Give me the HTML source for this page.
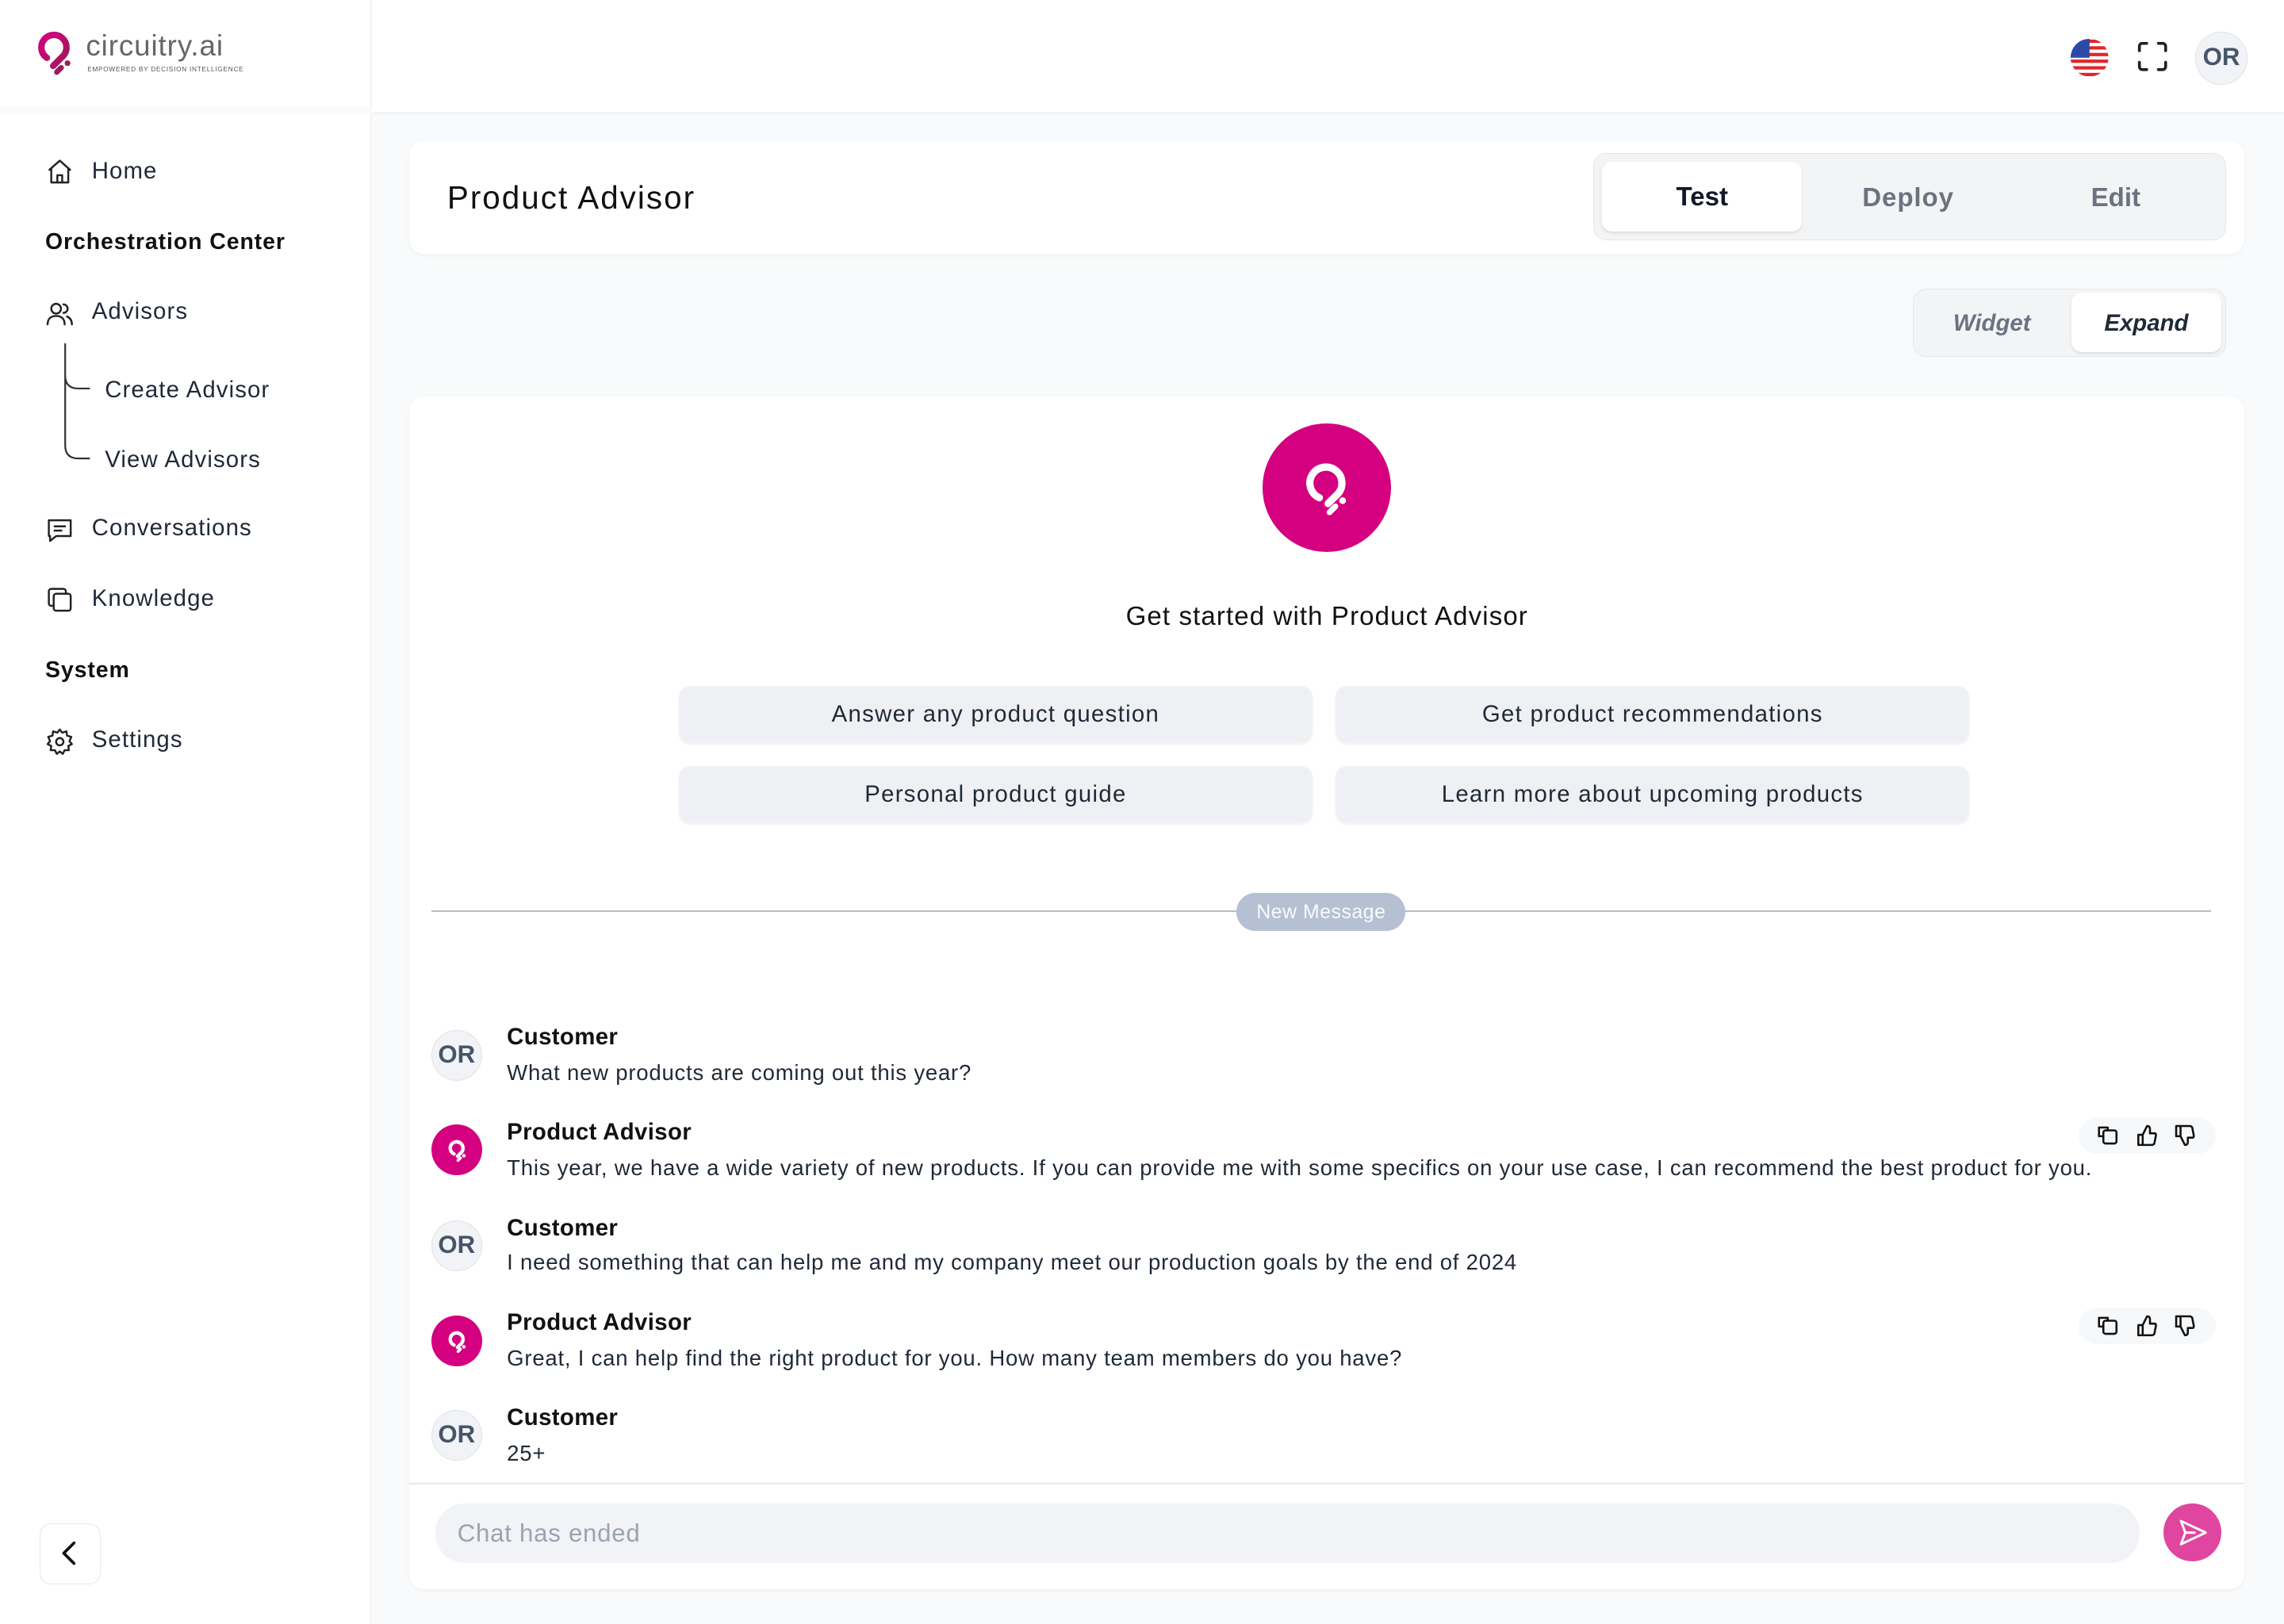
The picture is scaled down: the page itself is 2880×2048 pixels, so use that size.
<!DOCTYPE html>
<html><head><meta charset="utf-8"><style>
*{box-sizing:border-box;margin:0;padding:0}
html,body{width:2880px;height:2048px;overflow:hidden;background:#f9fafb}
#root{zoom:1.836735;width:1568px;height:1115px;position:relative;font-family:"Liberation Sans",sans-serif;color:#111827}
.abs{position:absolute}
.side{left:0;top:0;width:255px;height:1115px;background:#fff;border-right:1px solid #ececee}
.nav{position:absolute;left:63px;font-size:16px;color:#1f2937;line-height:20px;letter-spacing:.6px}
.ic{position:absolute;left:31px;width:20px;height:20px}
.bold{font-weight:bold;left:31px;font-size:15.5px;color:#111;letter-spacing:.5px}
.top{left:256px;top:0;right:0;height:78px;background:#fff;border-bottom:1px solid #e5e7eb}
.card{background:#fff;border-radius:10px;box-shadow:0 1px 3px rgba(0,0,0,.04)}
.sug{position:absolute;width:435px;height:39px;background:#eef0f4;border-radius:8px;font-size:16px;color:#1f2937;text-align:center;line-height:39px;box-shadow:0 1px 2px rgba(0,0,0,.06);letter-spacing:.7px}
.av{position:absolute;left:296px;width:35px;height:35px;border-radius:50%;background:#f1f3f6;border:1px solid #e0e3e8;color:#475569;font-weight:bold;font-size:17px;text-align:center;line-height:33px}
.avp{position:absolute;left:296px;width:35px;height:35px;border-radius:50%;background:#d4007f}
.nm{position:absolute;left:348px;font-weight:bold;font-size:16px;color:#111;letter-spacing:.2px}
.tx{position:absolute;left:348px;font-size:15px;color:#1f2937;white-space:nowrap;letter-spacing:.42px}
.act{position:absolute;left:1427px;width:94px;height:25px;border-radius:13px;background:#f7f8fa}
</style></head><body><div id="root">
<div class="abs side">
 <svg class="abs" style="left:24px;top:21px" width="30" height="32" viewBox="0 0 24 26"><defs><linearGradient id="g" x1="0" y1="0" x2="1" y2="1"><stop offset="0" stop-color="#d4007f"/><stop offset="1" stop-color="#9b1c5a"/></linearGradient></defs><path d="M6.5 15 A7 7 0 1 1 15 14.5 L10 19.5" fill="none" stroke="url(#g)" stroke-width="3.6" stroke-linecap="round"/><line x1="12" y1="23" x2="14.5" y2="20.5" stroke="#9b1c5a" stroke-width="3" stroke-linecap="round"/><circle cx="18" cy="18" r="1.6" fill="#9b1c5a"/></svg>
 <div class="abs" style="left:59px;top:20px;font-size:20px;color:#666;letter-spacing:.5px">circuitry.ai</div>
 <div class="abs" style="left:60px;top:45px;font-size:4.5px;color:#555;letter-spacing:.4px">EMPOWERED BY DECISION INTELLIGENCE</div>
 <div class="abs" style="left:0;top:73px;width:255px;height:5px;background:#fafafa"></div>
 <svg class="ic" style="top:108px" viewBox="0 0 24 24" fill="none" stroke="#222" stroke-width="1.6" stroke-linejoin="round"><path d="M3 11 L12 3 L21 11 M5 9.5 V21 H19 V9.5 M10 21 V15 H14 V21"/></svg>
 <div class="nav" style="top:108px">Home</div>
 <div class="nav bold" style="top:156px">Orchestration Center</div>
 <svg class="ic" style="top:205px" viewBox="0 0 24 24" fill="none" stroke="#222" stroke-width="1.6" stroke-linecap="round"><circle cx="9" cy="8" r="4"/><path d="M2 21 C2 16 5 14 9 14 C13 14 16 16 16 21"/><path d="M15 4.5 A3.5 3.5 0 0 1 15 11.5 M18 14.5 C20.5 15.5 22 17.5 22 21"/></svg>
 <div class="nav" style="top:204px">Advisors</div>
 <svg class="abs" style="left:40px;top:236px" width="26" height="86" fill="none" stroke="#333" stroke-width="1.2"><path d="M5 0 V22 Q5 31 14 31 H22 M5 22 V70 Q5 79 14 79 H22"/></svg>
 <div class="nav" style="left:72px;top:258px">Create Advisor</div>
 <div class="nav" style="left:72px;top:306px">View Advisors</div>
 <svg class="ic" style="top:354px" viewBox="0 0 24 24" fill="none" stroke="#222" stroke-width="1.6" stroke-linejoin="round"><path d="M3 4 H21 V17 H9 L4 21 V17 H3 Z M7 9 H17 M7 12.5 H14"/></svg>
 <div class="nav" style="top:353px">Conversations</div>
 <svg class="ic" style="top:402px" viewBox="0 0 24 24" fill="none" stroke="#222" stroke-width="1.6"><rect x="7" y="7" width="14" height="14" rx="2"/><path d="M17 7 V5 A2 2 0 0 0 15 3 H5 A2 2 0 0 0 3 5 V15 A2 2 0 0 0 5 17 H7"/></svg>
 <div class="nav" style="top:401px">Knowledge</div>
 <div class="nav bold" style="top:450px">System</div>
 <svg class="ic" style="top:499px" viewBox="0 0 24 24" fill="none" stroke="#222" stroke-width="1.6"><circle cx="12" cy="12" r="3"/><path d="M12 2 L14 4.5 L17.5 3.5 L18 7 L21.5 8 L20 11.5 L22 14 L19 15.5 L19.5 19 L16 19 L14.5 22 L12 20 L9.5 22 L8 19 L4.5 19 L5 15.5 L2 14 L4 11.5 L2.5 8 L6 7 L6.5 3.5 L10 4.5 Z" stroke-linejoin="round"/></svg>
 <div class="nav" style="top:498px">Settings</div>
 <div class="abs" style="left:27px;top:1046px;width:42px;height:42px;border:1px solid #e5e7eb;border-radius:8px;background:#fff"><svg width="40" height="40" viewBox="0 0 40 40" fill="none" stroke="#111" stroke-width="2" stroke-linecap="round" stroke-linejoin="round"><path d="M23 13 L16 20 L23 27"/></svg></div>
</div>
<div class="abs top">
 <svg class="abs" style="left:1165px;top:26px" width="27" height="27" viewBox="0 0 26 26"><defs><clipPath id="c"><circle cx="13" cy="13" r="12.5"/></clipPath></defs><g clip-path="url(#c)"><rect width="26" height="26" fill="#fff"/><g fill="#e0262a"><rect y="1" width="26" height="2.2"/><rect y="5.4" width="26" height="2.2"/><rect y="9.8" width="26" height="2.2"/><rect y="14.2" width="26" height="2.2"/><rect y="18.6" width="26" height="2.2"/><rect y="23" width="26" height="2.2"/></g><rect width="13" height="13" fill="#2b4aa8"/></g></svg>
 <svg class="abs" style="left:1211px;top:28px" width="22" height="22" viewBox="0 0 22 22" fill="none" stroke="#222" stroke-width="2" stroke-linecap="round"><path d="M2 7 V4 A2 2 0 0 1 4 2 H7 M15 2 H18 A2 2 0 0 1 20 4 V7 M20 15 V18 A2 2 0 0 1 18 20 H15 M7 20 H4 A2 2 0 0 1 2 18 V15"/></svg>
 <div class="abs" style="left:1251px;top:22px;width:36px;height:36px;border-radius:50%;background:#f1f3f6;border:1px solid #e0e3e8;text-align:center;line-height:34px;font-weight:bold;font-size:17px;color:#475569">OR</div>
</div>
<div class="abs card" style="left:281px;top:97px;width:1260px;height:77px"></div>
<div class="abs" style="left:307px;top:123px;font-size:22px;color:#111;letter-spacing:1.1px">Product Advisor</div>
<div class="abs" style="left:1094px;top:105px;width:434px;height:60px;background:#f3f4f6;border:1px solid #e5e7eb;border-radius:9px"></div>
<div class="abs" style="left:1100px;top:111px;width:137px;height:48px;background:#fff;border-radius:7px;box-shadow:0 1px 2px rgba(0,0,0,.1);text-align:center;line-height:49px;font-size:18px;font-weight:bold;color:#111827">Test</div>
<div class="abs" style="left:1250px;top:112px;width:120px;line-height:48px;text-align:center;font-size:18px;font-weight:bold;color:#6b7280;letter-spacing:.5px">Deploy</div>
<div class="abs" style="left:1400px;top:112px;width:105px;line-height:48px;text-align:center;font-size:18px;font-weight:bold;color:#6b7280">Edit</div>
<div class="abs" style="left:1313px;top:198px;width:215px;height:47px;background:#f3f4f6;border:1px solid #e5e7eb;border-radius:9px"></div>
<div class="abs" style="left:1315px;top:201px;width:105px;line-height:43px;text-align:center;font-size:16px;font-weight:bold;font-style:italic;color:#6b7280">Widget</div>
<div class="abs" style="left:1422px;top:201px;width:103px;height:41px;background:#fff;border-radius:7px;box-shadow:0 1px 2px rgba(0,0,0,.1);text-align:center;line-height:43px;font-size:16px;font-weight:bold;font-style:italic;color:#1f2937">Expand</div>
<div class="abs card" style="left:281px;top:272px;width:1260px;height:819px"></div>
<div class="abs" style="left:867px;top:291px;width:88px;height:88px;border-radius:50%;background:#d4007f"><svg width="88" height="88" viewBox="0 0 88 88"><path d="M39 51 A11 11 0 1 1 51 49 L45 55" fill="none" stroke="#fff" stroke-width="5" stroke-linecap="round"/><line x1="46" y1="61" x2="50" y2="57" stroke="#fff" stroke-width="4" stroke-linecap="round"/><circle cx="55" cy="53" r="2.3" fill="#fff"/></svg></div>
<div class="abs" style="left:600px;width:622px;top:413px;text-align:center;font-size:18px;color:#111;letter-spacing:.6px">Get started with Product Advisor</div>
<div class="sug" style="left:466px;top:471px">Answer any product question</div>
<div class="sug" style="left:917px;top:471px">Get product recommendations</div>
<div class="sug" style="left:466px;top:526px">Personal product guide</div>
<div class="sug" style="left:917px;top:526px">Learn more about upcoming products</div>
<div class="abs" style="left:296px;top:625px;width:1222px;height:1px;background:#b8bec8"></div>
<div class="abs" style="left:849px;top:613px;width:116px;height:26px;border-radius:13px;background:#b5c1d3;color:#f8fafc;font-size:13.5px;text-align:center;line-height:27px;letter-spacing:.3px">New Message</div>

<div class="av" style="top:707px">OR</div>
<div class="nm" style="top:703px">Customer</div>
<div class="tx" style="top:728px">What new products are coming out this year?</div>

<div class="avp" style="top:772px"><svg width="35" height="35" viewBox="0 0 88 88"><path d="M39 51 A11 11 0 1 1 51 49 L45 55" fill="none" stroke="#fff" stroke-width="6" stroke-linecap="round"/><line x1="46" y1="62" x2="50" y2="58" stroke="#fff" stroke-width="5" stroke-linecap="round"/><circle cx="56" cy="54" r="3" fill="#fff"/></svg></div>
<div class="nm" style="top:768px">Product Advisor</div>
<div class="tx" style="top:793px">This year, we have a wide variety of new products. If you can provide me with some specifics on your use case, I can recommend the best product for you.</div>

<div class="av" style="top:838px">OR</div>
<div class="nm" style="top:834px">Customer</div>
<div class="tx" style="top:858px">I need something that can help me and my company meet our production goals by the end of 2024</div>

<div class="avp" style="top:903px"><svg width="35" height="35" viewBox="0 0 88 88"><path d="M39 51 A11 11 0 1 1 51 49 L45 55" fill="none" stroke="#fff" stroke-width="6" stroke-linecap="round"/><line x1="46" y1="62" x2="50" y2="58" stroke="#fff" stroke-width="5" stroke-linecap="round"/><circle cx="56" cy="54" r="3" fill="#fff"/></svg></div>
<div class="nm" style="top:899px">Product Advisor</div>
<div class="tx" style="top:924px">Great, I can help find the right product for you. How many team members do you have?</div>

<div class="av" style="top:968px">OR</div>
<div class="nm" style="top:964px">Customer</div>
<div class="tx" style="top:989px">25+</div>

<div class="act" style="top:767px"><svg width="94" height="25" viewBox="0 0 94 25" fill="none" stroke="#111" stroke-width="1.4" stroke-linejoin="round" stroke-linecap="round"><rect x="17" y="9" width="9" height="9" rx="1.5"/><path d="M20 9 V7 H14 V13 H17"/><path d="M41 12 H44 V19 H41 Z M44 12 L47 6 Q49 6 49 8 V11 H52 Q53.5 11 53 13 L52 18 Q51.5 19 50 19 H44"/><path d="M67 13 H70 V6 H67 Z M70 13 L73 19 Q75 19 75 17 V14 H78 Q79.5 14 79 12 L78 7 Q77.5 6 76 6 H70"/></svg></div>
<div class="act" style="top:898px"><svg width="94" height="25" viewBox="0 0 94 25" fill="none" stroke="#111" stroke-width="1.4" stroke-linejoin="round" stroke-linecap="round"><rect x="17" y="9" width="9" height="9" rx="1.5"/><path d="M20 9 V7 H14 V13 H17"/><path d="M41 12 H44 V19 H41 Z M44 12 L47 6 Q49 6 49 8 V11 H52 Q53.5 11 53 13 L52 18 Q51.5 19 50 19 H44"/><path d="M67 13 H70 V6 H67 Z M70 13 L73 19 Q75 19 75 17 V14 H78 Q79.5 14 79 12 L78 7 Q77.5 6 76 6 H70"/></svg></div>

<div class="abs" style="left:281px;top:1018px;width:1260px;height:1px;background:#e5e7eb"></div>
<div class="abs" style="left:299px;top:1032px;width:1170px;height:41px;border-radius:20px;background:#f1f3f6;font-size:17px;color:#9ca3af;line-height:41px;padding-left:15px;letter-spacing:.4px">Chat has ended</div>
<div class="abs" style="left:1485px;top:1032px;width:40px;height:40px;border-radius:50%;background:#e0459f"><svg width="40" height="40" viewBox="0 0 40 40" fill="none" stroke="#fff" stroke-width="1.6" stroke-linejoin="round"><path d="M12 12 L29 20 L12 28 L15 20 Z M15 20 H22"/></svg></div>
</div></body></html>
